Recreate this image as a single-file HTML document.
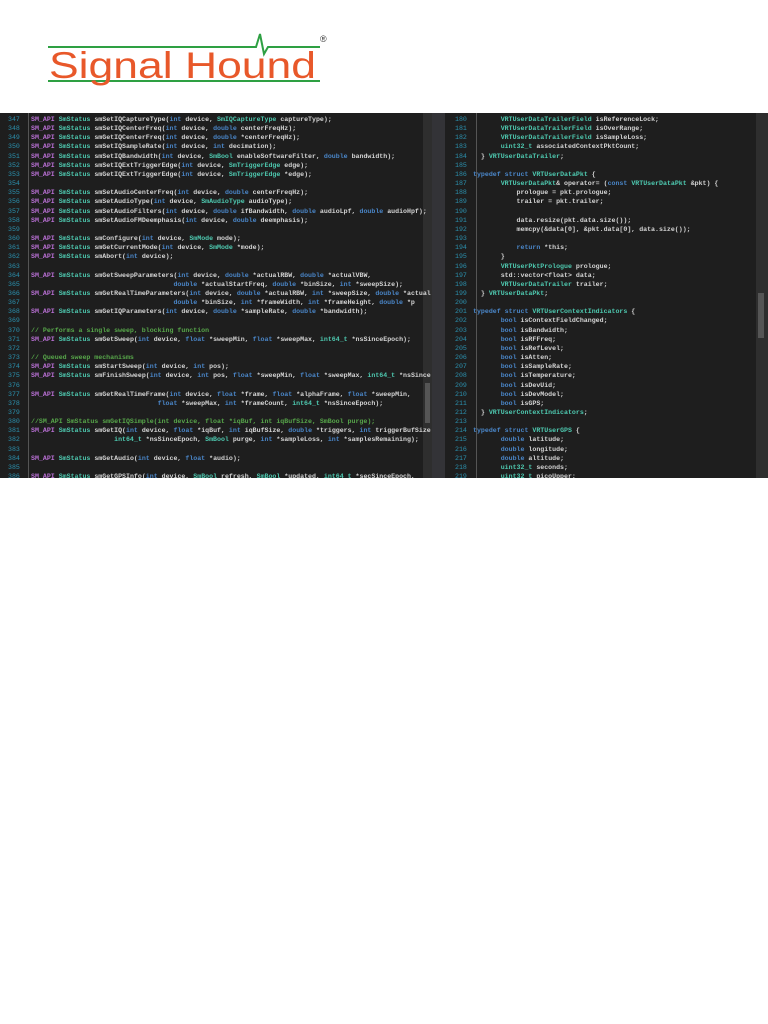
<!DOCTYPE html>
<html><head><meta charset="utf-8"><style>
body{margin:0;width:768px;height:1024px;background:#fff;position:relative;overflow:hidden;font-family:"Liberation Sans",sans-serif}
.logo{position:absolute;left:48px;top:28px}
.ed{position:absolute;left:0;top:113px;width:768px;height:365px;background:#1e1e1e;overflow:hidden}
pre{margin:0;position:absolute;font-family:"Liberation Mono",monospace;font-size:6.6px;line-height:9.15px;color:#d4d4d4;font-weight:bold;white-space:pre}
.n{color:#2b91af;font-weight:normal}
.p{color:#b86fd3}.t{color:#4ec9b0}.k{color:#4a86c8}.c{color:#57a64a}
</style></head><body>
<svg class="logo" width="290" height="60" viewBox="0 0 290 60">
<polyline points="0,19 204,19 208,19 212,6 216,26 220,19 272,19" fill="none" stroke="#2ea043" stroke-width="2"/>
<line x1="0" y1="53" x2="272" y2="53" stroke="#2ea043" stroke-width="2"/>
<text x="1" y="50" font-family="Liberation Sans" font-size="37" fill="#e8582a" textLength="267" lengthAdjust="spacingAndGlyphs">Signal Hound</text>
<text x="272" y="14" font-size="9" fill="#333">®</text>
</svg>
<div class="ed">
<div style="position:absolute;left:28px;top:0;width:1px;height:365px;background:#555"></div>
<div style="position:absolute;left:423px;top:0;width:9px;height:365px;background:#2e2e2e"></div>
<div style="position:absolute;left:425px;top:270px;width:5px;height:40px;background:#555"></div>
<div style="position:absolute;left:432px;top:0;width:13px;height:365px;background:#333337"></div>
<div style="position:absolute;left:476px;top:0;width:1px;height:365px;background:#555"></div>
<div style="position:absolute;left:756px;top:0;width:12px;height:365px;background:#2e2e2e"></div>
<div style="position:absolute;left:758px;top:180px;width:6px;height:45px;background:#555"></div>
<pre class="n" style="left:8px;top:2px">347
348
349
350
351
352
353
354
355
356
357
358
359
360
361
362
363
364
365
366
367
368
369
370
371
372
373
374
375
376
377
378
379
380
381
382
383
384
385
386</pre>
<pre style="left:31px;top:2px"><span class="p">SM_API</span> <span class="t">SmStatus</span> smSetIQCaptureType(<span class="k">int</span> device, <span class="t">SmIQCaptureType</span> captureType);
<span class="p">SM_API</span> <span class="t">SmStatus</span> smSetIQCenterFreq(<span class="k">int</span> device, <span class="k">double</span> centerFreqHz);
<span class="p">SM_API</span> <span class="t">SmStatus</span> smGetIQCenterFreq(<span class="k">int</span> device, <span class="k">double</span> *centerFreqHz);
<span class="p">SM_API</span> <span class="t">SmStatus</span> smSetIQSampleRate(<span class="k">int</span> device, <span class="k">int</span> decimation);
<span class="p">SM_API</span> <span class="t">SmStatus</span> smSetIQBandwidth(<span class="k">int</span> device, <span class="t">SmBool</span> enableSoftwareFilter, <span class="k">double</span> bandwidth);
<span class="p">SM_API</span> <span class="t">SmStatus</span> smSetIQExtTriggerEdge(<span class="k">int</span> device, <span class="t">SmTriggerEdge</span> edge);
<span class="p">SM_API</span> <span class="t">SmStatus</span> smGetIQExtTriggerEdge(<span class="k">int</span> device, <span class="t">SmTriggerEdge</span> *edge);

<span class="p">SM_API</span> <span class="t">SmStatus</span> smSetAudioCenterFreq(<span class="k">int</span> device, <span class="k">double</span> centerFreqHz);
<span class="p">SM_API</span> <span class="t">SmStatus</span> smSetAudioType(<span class="k">int</span> device, <span class="t">SmAudioType</span> audioType);
<span class="p">SM_API</span> <span class="t">SmStatus</span> smSetAudioFilters(<span class="k">int</span> device, <span class="k">double</span> ifBandwidth, <span class="k">double</span> audioLpf, <span class="k">double</span> audioHpf);
<span class="p">SM_API</span> <span class="t">SmStatus</span> smSetAudioFMDeemphasis(<span class="k">int</span> device, <span class="k">double</span> deemphasis);

<span class="p">SM_API</span> <span class="t">SmStatus</span> smConfigure(<span class="k">int</span> device, <span class="t">SmMode</span> mode);
<span class="p">SM_API</span> <span class="t">SmStatus</span> smGetCurrentMode(<span class="k">int</span> device, <span class="t">SmMode</span> *mode);
<span class="p">SM_API</span> <span class="t">SmStatus</span> smAbort(<span class="k">int</span> device);

<span class="p">SM_API</span> <span class="t">SmStatus</span> smGetSweepParameters(<span class="k">int</span> device, <span class="k">double</span> *actualRBW, <span class="k">double</span> *actualVBW,
                                    <span class="k">double</span> *actualStartFreq, <span class="k">double</span> *binSize, <span class="k">int</span> *sweepSize);
<span class="p">SM_API</span> <span class="t">SmStatus</span> smGetRealTimeParameters(<span class="k">int</span> device, <span class="k">double</span> *actualRBW, <span class="k">int</span> *sweepSize, <span class="k">double</span> *actual
                                    <span class="k">double</span> *binSize, <span class="k">int</span> *frameWidth, <span class="k">int</span> *frameHeight, <span class="k">double</span> *p
<span class="p">SM_API</span> <span class="t">SmStatus</span> smGetIQParameters(<span class="k">int</span> device, <span class="k">double</span> *sampleRate, <span class="k">double</span> *bandwidth);

<span class="c">// Performs a single sweep, blocking function</span>
<span class="p">SM_API</span> <span class="t">SmStatus</span> smGetSweep(<span class="k">int</span> device, <span class="k">float</span> *sweepMin, <span class="k">float</span> *sweepMax, <span class="t">int64_t</span> *nsSinceEpoch);

<span class="c">// Queued sweep mechanisms</span>
<span class="p">SM_API</span> <span class="t">SmStatus</span> smStartSweep(<span class="k">int</span> device, <span class="k">int</span> pos);
<span class="p">SM_API</span> <span class="t">SmStatus</span> smFinishSweep(<span class="k">int</span> device, <span class="k">int</span> pos, <span class="k">float</span> *sweepMin, <span class="k">float</span> *sweepMax, <span class="t">int64_t</span> *nsSince

<span class="p">SM_API</span> <span class="t">SmStatus</span> smGetRealTimeFrame(<span class="k">int</span> device, <span class="k">float</span> *frame, <span class="k">float</span> *alphaFrame, <span class="k">float</span> *sweepMin,
                                <span class="k">float</span> *sweepMax, <span class="k">int</span> *frameCount, <span class="t">int64_t</span> *nsSinceEpoch);

<span class="c">//SM_API SmStatus smGetIQSimple(int device, float *iqBuf, int iqBufSize, SmBool purge);</span>
<span class="p">SM_API</span> <span class="t">SmStatus</span> smGetIQ(<span class="k">int</span> device, <span class="k">float</span> *iqBuf, <span class="k">int</span> iqBufSize, <span class="k">double</span> *triggers, <span class="k">int</span> triggerBufSize
                     <span class="t">int64_t</span> *nsSinceEpoch, <span class="t">SmBool</span> purge, <span class="k">int</span> *sampleLoss, <span class="k">int</span> *samplesRemaining);

<span class="p">SM_API</span> <span class="t">SmStatus</span> smGetAudio(<span class="k">int</span> device, <span class="k">float</span> *audio);

<span class="p">SM_API</span> <span class="t">SmStatus</span> smGetGPSInfo(<span class="k">int</span> device, <span class="t">SmBool</span> refresh, <span class="t">SmBool</span> *updated, <span class="t">int64_t</span> *secSinceEpoch,</pre>
<pre class="n" style="left:455px;top:2px">180
181
182
183
184
185
186
187
188
189
190
191
192
193
194
195
196
197
198
199
200
201
202
203
204
205
206
207
208
209
210
211
212
213
214
215
216
217
218
219</pre>
<pre style="left:473px;top:2px">       <span class="t">VRTUserDataTrailerField</span> isReferenceLock;
       <span class="t">VRTUserDataTrailerField</span> isOverRange;
       <span class="t">VRTUserDataTrailerField</span> isSampleLoss;
       <span class="t">uint32_t</span> associatedContextPktCount;
  } <span class="t">VRTUserDataTrailer</span>;

<span class="k">typedef struct</span> <span class="t">VRTUserDataPkt</span> {
       <span class="t">VRTUserDataPkt</span>&amp; operator= (<span class="k">const</span> <span class="t">VRTUserDataPkt</span> &amp;pkt) {
           prologue = pkt.prologue;
           trailer = pkt.trailer;

           data.resize(pkt.data.size());
           memcpy(&amp;data[0], &amp;pkt.data[0], data.size());

           <span class="k">return</span> *this;
       }
       <span class="t">VRTUserPktPrologue</span> prologue;
       std::vector&lt;float&gt; data;
       <span class="t">VRTUserDataTrailer</span> trailer;
  } <span class="t">VRTUserDataPkt</span>;

<span class="k">typedef struct</span> <span class="t">VRTUserContextIndicators</span> {
       <span class="k">bool</span> isContextFieldChanged;
       <span class="k">bool</span> isBandwidth;
       <span class="k">bool</span> isRFFreq;
       <span class="k">bool</span> isRefLevel;
       <span class="k">bool</span> isAtten;
       <span class="k">bool</span> isSampleRate;
       <span class="k">bool</span> isTemperature;
       <span class="k">bool</span> isDevUid;
       <span class="k">bool</span> isDevModel;
       <span class="k">bool</span> isGPS;
  } <span class="t">VRTUserContextIndicators</span>;

<span class="k">typedef struct</span> <span class="t">VRTUserGPS</span> {
       <span class="k">double</span> latitude;
       <span class="k">double</span> longitude;
       <span class="k">double</span> altitude;
       <span class="t">uint32_t</span> seconds;
       <span class="t">uint32_t</span> picoUpper;</pre>
</div>
</body></html>
